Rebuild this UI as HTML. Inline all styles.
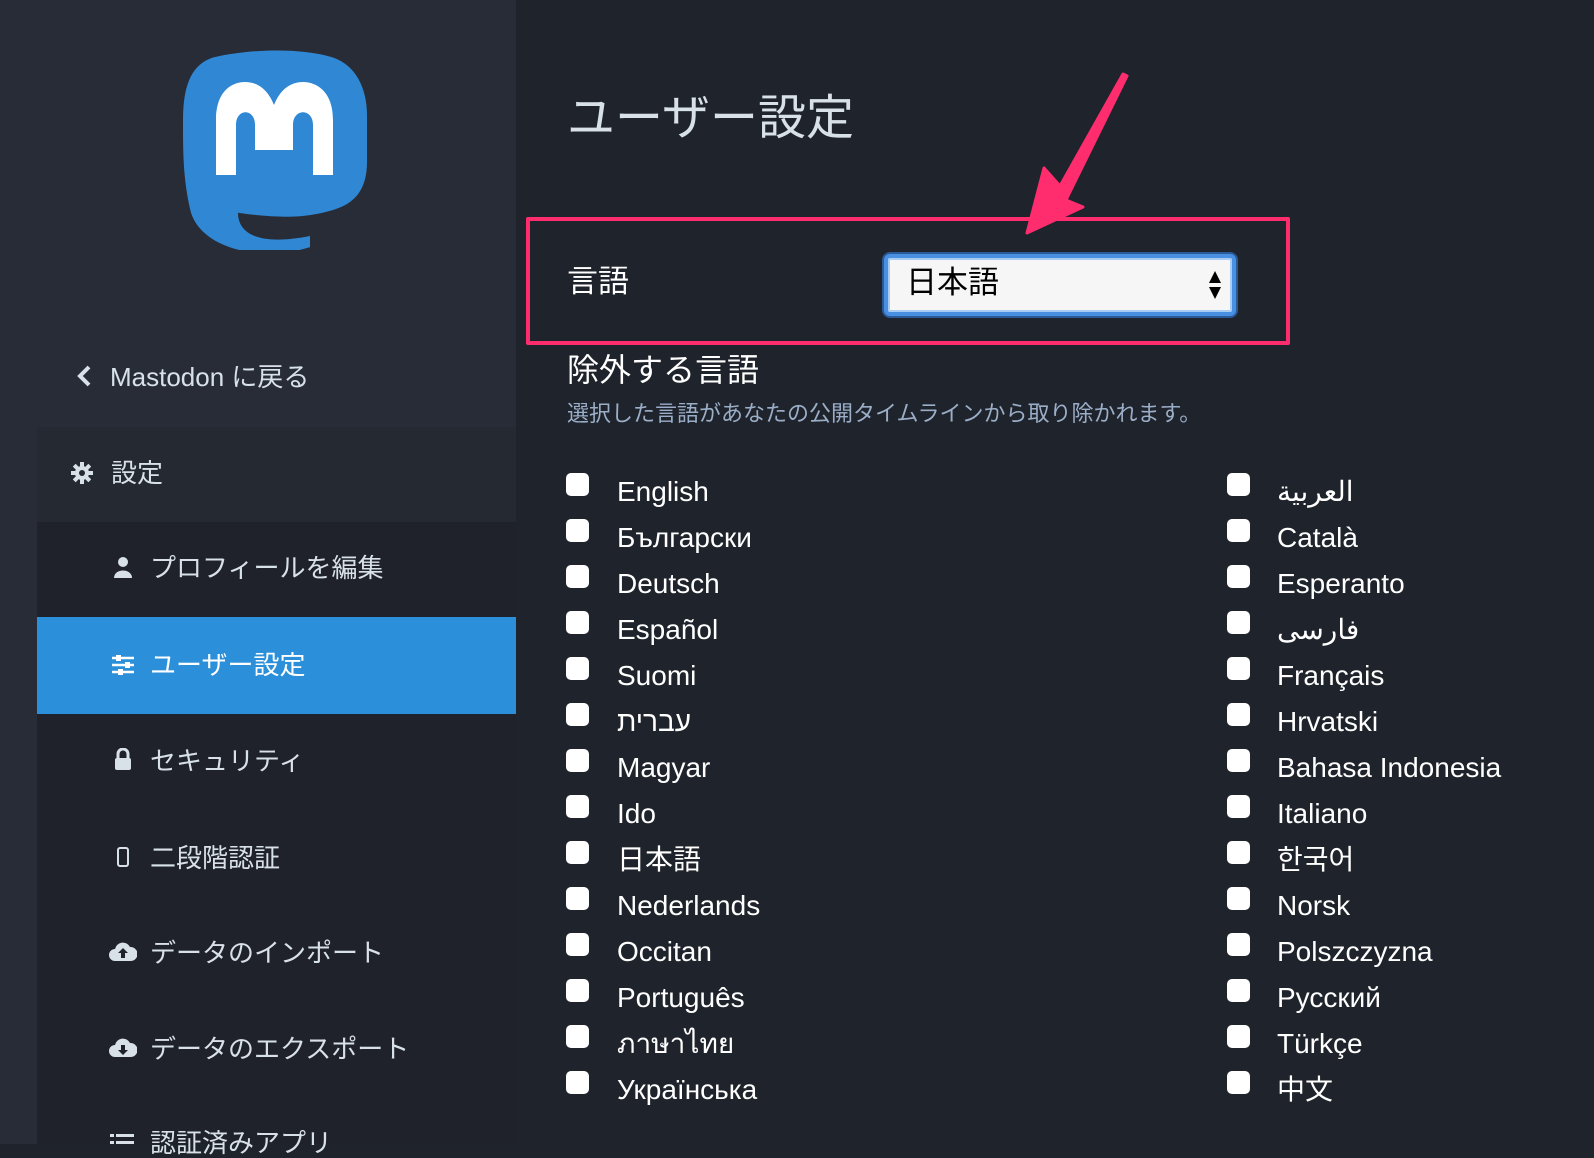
<!DOCTYPE html>
<html><head><meta charset="utf-8">
<style>
*{margin:0;padding:0;box-sizing:border-box}
body{width:1594px;height:1144px;overflow:hidden;background:#1f232b;font-family:"Liberation Sans","Noto Sans CJK JP",sans-serif;position:relative}
.side{position:absolute;left:0;top:0;width:516px;height:1144px;background:#282c37}
.nav{position:absolute;left:37px;top:427px;width:479px;height:717px;background:#1f222a}
.t{position:absolute;white-space:nowrap;line-height:1}
.cb{position:absolute;width:23px;height:23px;background:#fff;border-radius:5px}
.lb{position:absolute;color:#fff;font-size:28px;white-space:nowrap;line-height:1}
</style></head><body>
<div class="side"></div>
<div class="nav"></div>
<div style="position:absolute;left:37px;top:427px;width:479px;height:95px;background:#252932"></div>
<div style="position:absolute;left:37px;top:617px;width:479px;height:97px;background:#2b90d9"></div>

<svg style="position:absolute;left:183px;top:50px" width="186" height="200" viewBox="0 0 186 200">
<path d="M30 8 C70 -2 120 -2 150 8 C172 16 184 40 184 70 L184 120 C184 150 172 165 150 172 C125 180 100 182 55 175 C55 200 80 210 127 200 L127 212 C80 228 20 215 8 175 C0 140 0 110 0 75 C0 35 10 15 30 8Z" fill="#3088d4" transform="scale(1,0.93)"/>
<path d="M33 125 L33 70 C33 40 50 32 62 32 C75 32 85 40 91 55 C97 40 107 32 120 32 C132 32 150 40 150 70 L150 125 L130 125 L130 75 C130 58 110 58 110 75 L110 100 L72 100 L72 75 C72 58 53 58 53 75 L53 125Z" fill="#fff"/>
</svg>

<svg style="position:absolute;left:76px;top:364px" width="16" height="24"><path d="M13 3 L4 12 L13 21" stroke="#d9e1e8" stroke-width="4" fill="none"/></svg>
<div class="t" style="left:110px;top:364px;font-size:26px;color:#d9e1e8">Mastodon に戻る</div>

<svg style="position:absolute;left:71px;top:462px" width="22" height="22" viewBox="0 0 22 22"><g fill="#d9e1e8"><circle cx="11" cy="11" r="7"/><rect x="9" y="0" width="4" height="22"/><rect x="0" y="9" width="22" height="4"/><rect x="9" y="0" width="4" height="22" transform="rotate(45 11 11)"/><rect x="9" y="0" width="4" height="22" transform="rotate(-45 11 11)"/></g><circle cx="11" cy="11" r="3" fill="#252932"/></svg>
<div class="t" style="left:111px;top:460px;font-size:26px;color:#d9e1e8">設定</div>

<svg style="position:absolute;left:113px;top:556px" width="20" height="22"><circle cx="10" cy="6" r="5" fill="#d9e1e8"/><path d="M1 22 C1 12 19 12 19 22Z" fill="#d9e1e8"/></svg>
<div class="t" style="left:150px;top:555px;font-size:26px;color:#d9e1e8">プロフィールを編集</div>

<svg style="position:absolute;left:112px;top:655px" width="22" height="20"><g stroke="#fff" stroke-width="2.5"><line x1="0" y1="3" x2="22" y2="3"/><line x1="0" y1="10" x2="22" y2="10"/><line x1="0" y1="17" x2="22" y2="17"/></g><g fill="#fff"><rect x="4" y="0" width="5" height="6"/><rect x="13" y="7" width="5" height="6"/><rect x="6" y="14" width="5" height="6"/></g></svg>
<div class="t" style="left:150px;top:652px;font-size:26px;color:#fff">ユーザー設定</div>

<svg style="position:absolute;left:114px;top:748px" width="18" height="22"><path d="M4 10 V6 a5 5 0 0 1 10 0 V10" stroke="#d9e1e8" stroke-width="3" fill="none"/><rect x="1" y="10" width="16" height="12" rx="2" fill="#d9e1e8"/></svg>
<div class="t" style="left:150px;top:748px;font-size:26px;color:#d9e1e8">セキュリティ</div>

<svg style="position:absolute;left:117px;top:847px" width="12" height="20"><rect x="1" y="1" width="10" height="18" rx="2" stroke="#d9e1e8" stroke-width="2" fill="none"/></svg>
<div class="t" style="left:150px;top:845px;font-size:26px;color:#d9e1e8">二段階認証</div>

<svg style="position:absolute;left:109px;top:941px" width="28" height="20"><path d="M6 20 a6 6 0 0 1 0-12 a8 8 0 0 1 15-2 a7 7 0 0 1 1 14Z" fill="#d9e1e8"/><path d="M14 7 L9 12 h3 v5 h4 v-5 h3Z" fill="#1f222a"/></svg>
<div class="t" style="left:150px;top:940px;font-size:26px;color:#d9e1e8">データのインポート</div>

<svg style="position:absolute;left:109px;top:1037px" width="28" height="20"><path d="M6 20 a6 6 0 0 1 0-12 a8 8 0 0 1 15-2 a7 7 0 0 1 1 14Z" fill="#d9e1e8"/><path d="M14 18 L9 13 h3 v-5 h4 v5 h3Z" fill="#1f222a"/></svg>
<div class="t" style="left:150px;top:1036px;font-size:26px;color:#d9e1e8">データのエクスポート</div>

<svg style="position:absolute;left:110px;top:1134px" width="24" height="14"><g fill="#d9e1e8"><rect x="0" y="0" width="4" height="3"/><rect x="6" y="0" width="18" height="3"/><rect x="0" y="7" width="4" height="3"/><rect x="6" y="7" width="18" height="3"/></g></svg>
<div class="t" style="left:150px;top:1130px;font-size:26px;color:#d9e1e8">認証済みアプリ</div>

<div class="t" style="left:567px;top:95px;font-size:48px;color:#d9e1e8">ユーザー設定</div>

<div style="position:absolute;left:526px;top:217px;width:764px;height:128px;border:4px solid #ff2d6e;border-radius:2px"></div>
<div class="t" style="left:567px;top:266px;font-size:31px;color:#fff">言語</div>
<div style="position:absolute;left:884px;top:254px;width:352px;height:62px;border-radius:6px;background:#f6f6f6;border:4px solid #4a90e2;box-shadow:0 0 0 2px #2a5a9a,inset 0 0 0 2px #a9cdf3"></div>
<div class="t" style="left:906px;top:267px;font-size:31px;color:#000">日本語</div>
<svg style="position:absolute;left:1208px;top:270px" width="14" height="30"><path d="M7 1 L13 13 H1Z M7 29 L13 17 H1Z" fill="#000"/></svg>

<svg style="position:absolute;left:0;top:0" width="1594" height="400"><path d="M1127 76 L1123 74 L1060 186 L1044 168 L1027 233 L1083 207 L1066 200 Z" fill="#ff2d6e" stroke="#ff2d6e" stroke-width="3" stroke-linejoin="round"/></svg>

<div class="t" style="left:567px;top:354px;font-size:32px;color:#fff">除外する言語</div>
<div class="t" style="left:567px;top:403px;font-size:22px;color:#9baec8">選択した言語があなたの公開タイムラインから取り除かれます。</div>

<div class="cb" style="left:566px;top:473px"></div><div class="lb" style="left:617px;top:478px">English</div>
<div class="cb" style="left:566px;top:519px"></div><div class="lb" style="left:617px;top:524px">Български</div>
<div class="cb" style="left:566px;top:565px"></div><div class="lb" style="left:617px;top:570px">Deutsch</div>
<div class="cb" style="left:566px;top:611px"></div><div class="lb" style="left:617px;top:616px">Español</div>
<div class="cb" style="left:566px;top:657px"></div><div class="lb" style="left:617px;top:662px">Suomi</div>
<div class="cb" style="left:566px;top:703px"></div><div class="lb" style="left:617px;top:708px">עברית</div>
<div class="cb" style="left:566px;top:749px"></div><div class="lb" style="left:617px;top:754px">Magyar</div>
<div class="cb" style="left:566px;top:795px"></div><div class="lb" style="left:617px;top:800px">Ido</div>
<div class="cb" style="left:566px;top:841px"></div><div class="lb" style="left:617px;top:846px">日本語</div>
<div class="cb" style="left:566px;top:887px"></div><div class="lb" style="left:617px;top:892px">Nederlands</div>
<div class="cb" style="left:566px;top:933px"></div><div class="lb" style="left:617px;top:938px">Occitan</div>
<div class="cb" style="left:566px;top:979px"></div><div class="lb" style="left:617px;top:984px">Português</div>
<div class="cb" style="left:566px;top:1025px"></div><div class="lb" style="left:617px;top:1030px">ภาษาไทย</div>
<div class="cb" style="left:566px;top:1071px"></div><div class="lb" style="left:617px;top:1076px">Українська</div>

<div class="cb" style="left:1227px;top:473px"></div><div class="lb" style="left:1277px;top:478px">العربية</div>
<div class="cb" style="left:1227px;top:519px"></div><div class="lb" style="left:1277px;top:524px">Català</div>
<div class="cb" style="left:1227px;top:565px"></div><div class="lb" style="left:1277px;top:570px">Esperanto</div>
<div class="cb" style="left:1227px;top:611px"></div><div class="lb" style="left:1277px;top:616px">فارسی</div>
<div class="cb" style="left:1227px;top:657px"></div><div class="lb" style="left:1277px;top:662px">Français</div>
<div class="cb" style="left:1227px;top:703px"></div><div class="lb" style="left:1277px;top:708px">Hrvatski</div>
<div class="cb" style="left:1227px;top:749px"></div><div class="lb" style="left:1277px;top:754px">Bahasa Indonesia</div>
<div class="cb" style="left:1227px;top:795px"></div><div class="lb" style="left:1277px;top:800px">Italiano</div>
<div class="cb" style="left:1227px;top:841px"></div><div class="lb" style="left:1277px;top:846px">한국어</div>
<div class="cb" style="left:1227px;top:887px"></div><div class="lb" style="left:1277px;top:892px">Norsk</div>
<div class="cb" style="left:1227px;top:933px"></div><div class="lb" style="left:1277px;top:938px">Polszczyzna</div>
<div class="cb" style="left:1227px;top:979px"></div><div class="lb" style="left:1277px;top:984px">Русский</div>
<div class="cb" style="left:1227px;top:1025px"></div><div class="lb" style="left:1277px;top:1030px">Türkçe</div>
<div class="cb" style="left:1227px;top:1071px"></div><div class="lb" style="left:1277px;top:1076px">中文</div>
</body></html>
